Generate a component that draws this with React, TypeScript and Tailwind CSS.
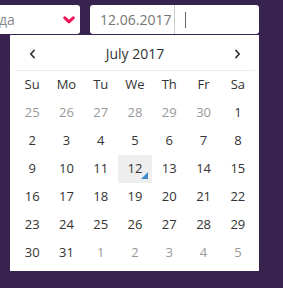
import React from "react";

// July 2017 picker, opened under the date range input.

const DAY_NAMES = ["Su", "Mo", "Tu", "We", "Th", "Fr", "Sa"];

type Day = { n: number; muted?: boolean; today?: boolean };

const WEEKS: Day[][] = [
  [{ n: 25, muted: true }, { n: 26, muted: true }, { n: 27, muted: true }, { n: 28, muted: true }, { n: 29, muted: true }, { n: 30, muted: true }, { n: 1 }],
  [{ n: 2 }, { n: 3 }, { n: 4 }, { n: 5 }, { n: 6 }, { n: 7 }, { n: 8 }],
  [{ n: 9 }, { n: 10 }, { n: 11 }, { n: 12, today: true }, { n: 13 }, { n: 14 }, { n: 15 }],
  [{ n: 16 }, { n: 17 }, { n: 18 }, { n: 19 }, { n: 20 }, { n: 21 }, { n: 22 }],
  [{ n: 23 }, { n: 24 }, { n: 25 }, { n: 26 }, { n: 27 }, { n: 28 }, { n: 29 }],
  [{ n: 30 }, { n: 31 }, { n: 1, muted: true }, { n: 2, muted: true }, { n: 3, muted: true }, { n: 4, muted: true }, { n: 5, muted: true }],
];

function Arrow({ dir }: { dir: "left" | "right" }) {
  return (
    <svg width="7" height="10" viewBox="0 0 7 10" className="block">
      <path
        d={dir === "left" ? "M5 1.5 L1.8 5 L5 8.5" : "M2 1.5 L5.2 5 L2 8.5"}
        fill="none"
        stroke="#333"
        strokeWidth="1.8"
        strokeLinecap="round"
        strokeLinejoin="round"
      />
    </svg>
  );
}

export default function App() {
  return (
    <div
      className="h-[288px] w-[283px] overflow-hidden bg-[#38234f] pt-[5px]"
      style={{ fontFamily: '"Open Sans", "Liberation Sans", sans-serif' }}
    >
      <div className="flex h-[29px] gap-[10px]">
        <div className="flex w-[80px] items-center justify-between rounded-r-[3px] bg-white pr-[5px]">
          <span className="-ml-[1px] text-[14px] text-[#888]">да</span>
          <svg width="12" height="8" viewBox="0 0 12 8">
            <path d="M1.8 1.8 L6 5.8 L10.2 1.8" fill="none" stroke="#f0145a" strokeWidth="3" strokeLinecap="round" strokeLinejoin="round" />
          </svg>
        </div>
        <div className="flex w-[169px] rounded-[3px] bg-white">
          <div className="flex w-[85px] items-center border-r border-[#ccc] pl-[10px] text-[14px] text-[#777]">
            12.06.2017
          </div>
          <div className="flex items-center pl-[10px]">
            <div className="h-[16px] w-px bg-[#666]" />
          </div>
        </div>
      </div>

      <div className="ml-[10px] mt-px w-[249px] bg-white pb-[4px] pl-[5px] pr-[4px] text-[13px] text-[#333]">
        <div className="grid h-[36px] grid-cols-7 items-center border-b border-[#eee] pt-[2px]">
          <div className="flex justify-center">
            <Arrow dir="left" />
          </div>
          <div className="col-span-5 text-center text-[14px]">July 2017</div>
          <div className="flex justify-center">
            <Arrow dir="right" />
          </div>
        </div>
        <div className="grid grid-cols-7">
          {DAY_NAMES.map((d) => (
            <div key={d} className="flex h-[28px] items-center justify-center">
              {d}
            </div>
          ))}
          {WEEKS.flat().map((d, i) => (
            <div
              key={i}
              className={
                "relative flex h-[28px] items-center justify-center " +
                (d.muted ? "text-[#999] " : "") +
                (d.today ? "bg-[#eee]" : "")
              }
            >
              {d.n}
              {d.today ? (
                <span className="absolute bottom-[4px] right-[4px] h-0 w-0 border-b-[7px] border-l-[7px] border-b-[#428bca] border-l-transparent" />
              ) : null}
            </div>
          ))}
        </div>
      </div>
    </div>
  );
}
